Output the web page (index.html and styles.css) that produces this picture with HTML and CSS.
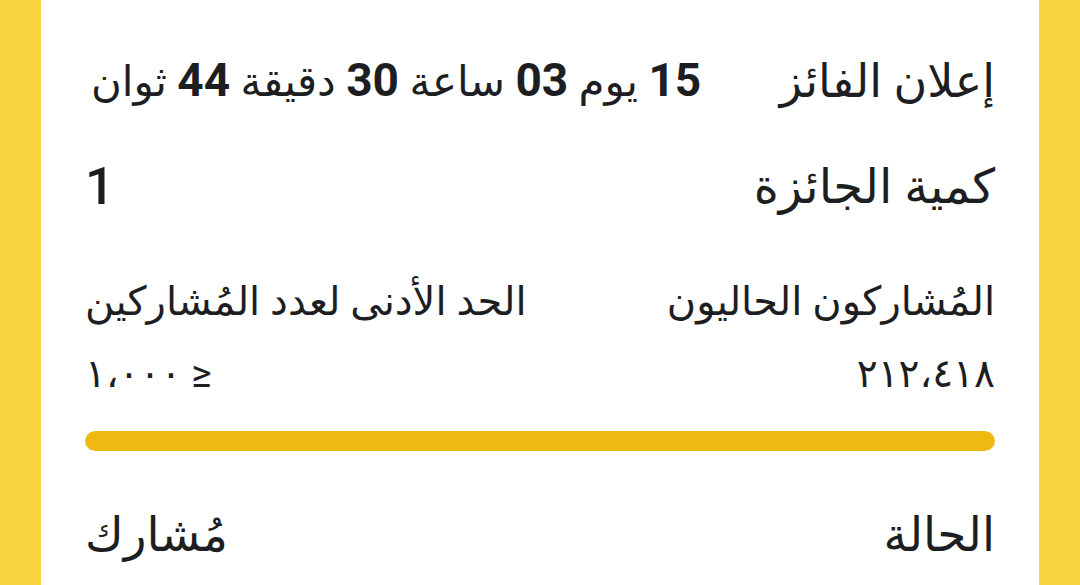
FILE: index.html
```html
<!DOCTYPE html>
<html lang="ar" dir="rtl">
<head>
  <meta charset="UTF-8">
  <meta name="viewport" content="width=device-width, initial-scale=1.0">
  <title>تفاصيل السحب</title>
  <link rel="stylesheet" href="styles.css">
</head>
<body>
  <div class="card">
    <div class="row row-head">
      <span class="label">إعلان الفائز</span>
      <span class="countdown"><b>15</b> يوم <b>03</b> ساعة <b>30</b> دقيقة <b>44</b> ثوان</span>
    </div>

    <div class="row row-prize">
      <span class="label">كمية الجائزة</span>
      <span class="prize">1</span>
    </div>

    <div class="stats">
      <div class="stat">
        <span class="label">المُشاركون الحاليون</span>
        <span class="value">٢١٢،٤١٨</span>
      </div>
      <div class="stat stat-end">
        <span class="label">الحد الأدنى لعدد المُشاركين</span>
        <span class="value">≤ ١،٠٠٠</span>
      </div>
    </div>

    <div class="progress"><div class="progress-fill" style="width: 100%"></div></div>

    <div class="row row-status">
      <span class="label">الحالة</span>
      <span class="status">مُشارك</span>
    </div>
  </div>
</body>
</html>
```
FILE: styles.css
```css
* {
  box-sizing: border-box;
}

body {
  margin: 0;
  background: #fbd443;
  font-family: Roboto, "DejaVu Sans", sans-serif;
  color: #1d1e21;
}

.card {
  background: #ffffff;
  margin: 0 41px;
  padding: 52px 44px 40px;
  min-height: 585px;
}

.row {
  display: flex;
  justify-content: space-between;
  align-items: center;
  font-size: 46px;
  line-height: 56px;
}

.countdown {
  font-size: 42px;
  padding-left: 6px;
}

.countdown b {
  font-size: 46px;
  font-weight: 700;
}

.row-prize {
  margin-top: 49px;
}

.row-prize .label {
  font-size: 48px;
}

.prize {
  font-size: 52px;
  font-weight: 500;
}

.stats {
  display: flex;
  justify-content: space-between;
  margin-top: 59px;
  font-size: 40px;
  line-height: 56px;
}

.stat {
  display: flex;
  flex-direction: column;
  gap: 16px;
}

.stat .value {
  font-size: 39px;
}

.stat-end {
  align-items: flex-end;
}

.progress {
  margin-top: 29px;
  height: 20px;
  border-radius: 10px;
  background: #f3ecd2;
  overflow: hidden;
}

.progress-fill {
  height: 100%;
  background: #efb912;
  border-radius: 10px;
}

.row-status {
  margin-top: 56px;
  font-size: 47px;
}
```
